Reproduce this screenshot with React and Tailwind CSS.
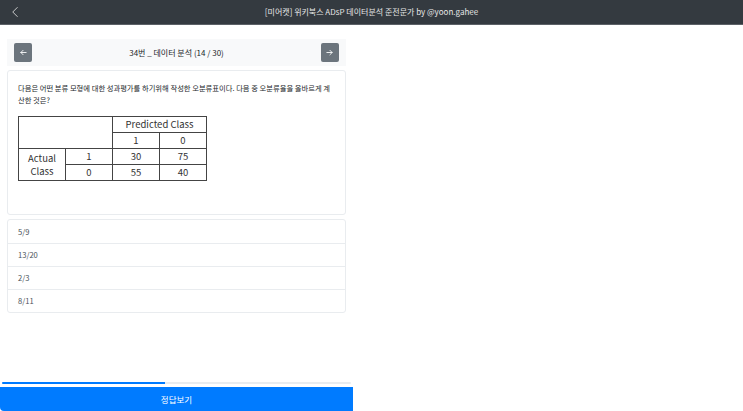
import { ChevronLeft } from 'lucide-react';

const options = ['5/9', '13/20', '2/3', '8/11'];

const Arrow = ({ dir }) => (
  <svg className="h-[7px] w-[7px]" viewBox="0 0 16 16" fill="none" stroke="currentColor" strokeWidth="2" strokeLinecap="round" strokeLinejoin="round">
    {dir === 'left' ? (
      <path d="M14 8H2M7 3L2 8l5 5" />
    ) : (
      <path d="M2 8h12M9 3l5 5-5 5" />
    )}
  </svg>
);

const App = () => {
  const cell = 'border border-[#444] h-[16px] w-[47px] text-center align-middle p-0';

  return (
    <div className="w-[743px] h-[411px] bg-white flex flex-col overflow-hidden" style={{ fontFamily: '"Noto Sans CJK KR", "Noto Sans", sans-serif' }}>
      {/* 상단 헤더 */}
      <div className="relative h-[25px] shrink-0 bg-[#343a40] border-b border-[#5c6167] flex items-center justify-center">
        <ChevronLeft className="absolute left-[6px] top-[3px] h-[18px] w-[18px] text-[#d8d8d8]" strokeWidth={1.2} />
        <span className="text-[8px] text-[#e6e6e6] leading-none">[미어캣] 위키북스 ADsP 데이터분석 준전문가 by @yoon.gahee</span>
      </div>

      <div className="w-[353px] flex-1 flex flex-col">
        <div className="px-[7px] pt-[14px]">
          {/* 문제 네비게이션 */}
          <div className="h-[27px] bg-[#f8f9fa] px-[7px] flex items-center justify-between">
            <button className="h-[19px] w-[18px] rounded-[2px] bg-[#6c757d] text-white flex items-center justify-center">
              <Arrow dir="left" />
            </button>
            <span className="text-[8px] text-[#212529]">34번 _ 데이터 분석 (14 / 30)</span>
            <button className="h-[19px] w-[18px] rounded-[2px] bg-[#6c757d] text-white flex items-center justify-center">
              <Arrow dir="right" />
            </button>
          </div>

          {/* 문제 카드 */}
          <div className="mt-[4px] h-[145px] border border-[#e9ecef] rounded-[3px] pl-[10px] pr-[10px] pt-[11px]">
            <p className="text-[7.3px] leading-[12px] text-[#212529] break-all">
              다음은 어떤 분류 모형에 대한 성과평가를 하기위해 작성한 오분류표이다. 다음 중 오분류율을 올바르게 계산한 것은?
            </p>
            <table className="mt-[10px] border-collapse text-[9.5px] text-[#333] leading-none">
              <tbody>
                <tr>
                  <td className={cell} colSpan={2} rowSpan={2}></td>
                  <td className={cell} colSpan={2}>Predicted Class</td>
                </tr>
                <tr>
                  <td className={cell}>1</td>
                  <td className={cell}>0</td>
                </tr>
                <tr>
                  <td className={`${cell} leading-[13px]`} rowSpan={2}>Actual<br />Class</td>
                  <td className={cell}>1</td>
                  <td className={cell}>30</td>
                  <td className={cell}>75</td>
                </tr>
                <tr>
                  <td className={cell}>0</td>
                  <td className={cell}>55</td>
                  <td className={cell}>40</td>
                </tr>
              </tbody>
            </table>
          </div>

          {/* 보기 목록 */}
          <div className="mt-[4px] border border-[#e9ecef] rounded-[3px]">
            {options.map((opt, i) => (
              <div
                key={opt}
                className={`h-[23px] px-[10px] flex items-center text-[7.6px] text-[#495057] ${i > 0 ? 'border-t border-[#e9ecef]' : ''}`}
              >
                {opt}
              </div>
            ))}
          </div>
        </div>

        <div className="flex-1" />

        {/* 진행바 */}
        <div className="mx-[2px] h-[2px] bg-[#e9ecef] rounded-full overflow-hidden">
          <div className="h-full bg-[#007bff]" style={{ width: `${(14 / 30) * 100}%` }} />
        </div>
        <button className="mt-[3px] h-[24px] w-full bg-[#007bff] text-white text-[8.5px] rounded-bl-[4px] flex items-center justify-center">
          정답보기
        </button>
      </div>
    </div>
  );
};

export default App;
